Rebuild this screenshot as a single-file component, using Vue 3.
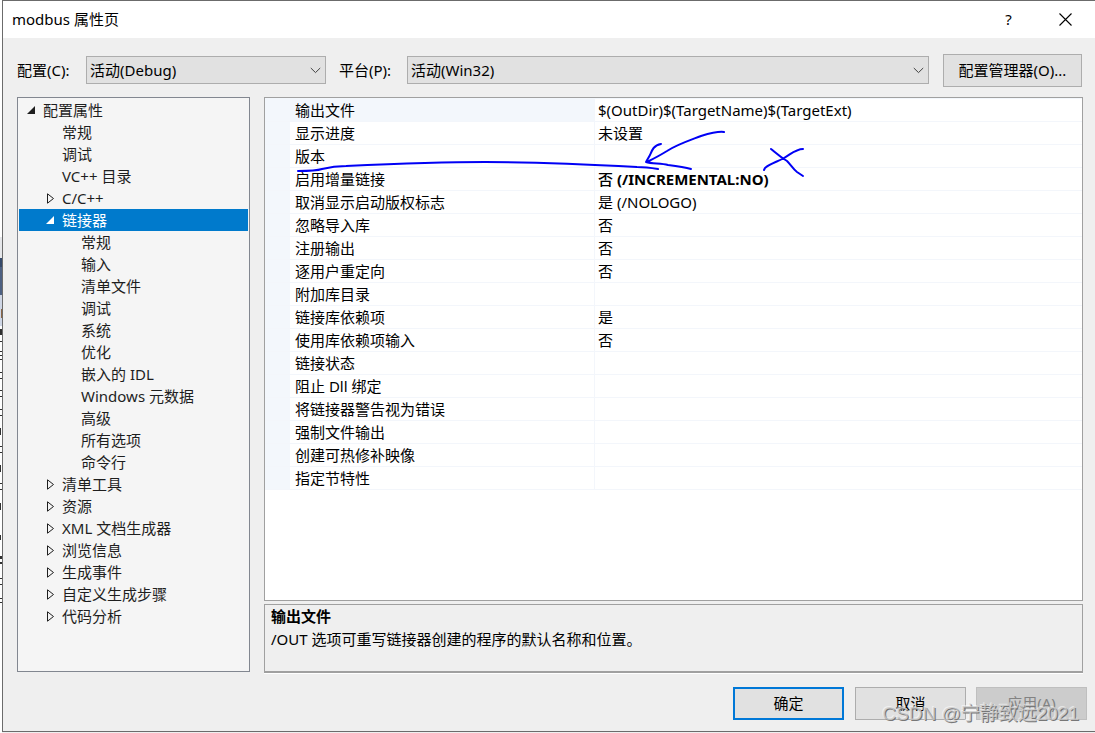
<script setup>
import { ref } from 'vue'

const config = ref('活动(Debug)')
const platform = ref('活动(Win32)')

const tree = [
  { label: '配置属性', level: 1, state: 'open' },
  { label: '常规', level: 2 },
  { label: '调试', level: 2 },
  { label: 'VC++ 目录', level: 2 },
  { label: 'C/C++', level: 2, state: 'closed' },
  { label: '链接器', level: 2, state: 'open', selected: true },
  { label: '常规', level: 3 },
  { label: '输入', level: 3 },
  { label: '清单文件', level: 3 },
  { label: '调试', level: 3 },
  { label: '系统', level: 3 },
  { label: '优化', level: 3 },
  { label: '嵌入的 IDL', level: 3 },
  { label: 'Windows 元数据', level: 3 },
  { label: '高级', level: 3 },
  { label: '所有选项', level: 3 },
  { label: '命令行', level: 3 },
  { label: '清单工具', level: 2, state: 'closed' },
  { label: '资源', level: 2, state: 'closed' },
  { label: 'XML 文档生成器', level: 2, state: 'closed' },
  { label: '浏览信息', level: 2, state: 'closed' },
  { label: '生成事件', level: 2, state: 'closed' },
  { label: '自定义生成步骤', level: 2, state: 'closed' },
  { label: '代码分析', level: 2, state: 'closed' },
]

const properties = [
  { name: '输出文件', value: '$(OutDir)$(TargetName)$(TargetExt)', current: true },
  { name: '显示进度', value: '未设置' },
  { name: '版本', value: '' },
  { name: '启用增量链接', value: '否', flag: '(/INCREMENTAL:NO)', changed: true },
  { name: '取消显示启动版权标志', value: '是 (/NOLOGO)' },
  { name: '忽略导入库', value: '否' },
  { name: '注册输出', value: '否' },
  { name: '逐用户重定向', value: '否' },
  { name: '附加库目录', value: '' },
  { name: '链接库依赖项', value: '是' },
  { name: '使用库依赖项输入', value: '否' },
  { name: '链接状态', value: '' },
  { name: '阻止 Dll 绑定', value: '' },
  { name: '将链接器警告视为错误', value: '' },
  { name: '强制文件输出', value: '' },
  { name: '创建可热修补映像', value: '' },
  { name: '指定节特性', value: '' },
]
</script>

<template>
  <div class="screen">
    <svg class="backdrop" width="2" height="733" viewBox="0 0 2 733" aria-hidden="true">
      <rect width="2" height="733" fill="#ffffff" />
      <rect y="237" width="2" height="22" fill="#e6e7ea" />
      <rect y="258" width="2" height="9" fill="#35496a" />
      <rect y="267" width="2" height="28" fill="#4d6082" />
      <rect y="295" width="2" height="31" fill="#cfd6e5" />
      <rect x="1" y="309" width="1" height="9" fill="#8a6544" />
      <path d="M0 329h2v6H0zM0 341h2v1H0zM0 351h2v1H0zM0 355h2v1H0zM0 359h2v1H0zM0 372h2v1H0zM0 378h2v1H0zM0 390h2v1H0zM0 396h2v1H0zM0 409h2v1H0zM0 415h2v1H0zM0 428h1v7H0zM0 446h2v1H0zM0 452h2v1H0zM0 465h1v7H0zM0 483h2v1H0zM0 489h2v1H0zM0 503h1v7H0zM0 535h1v5H0zM0 556h2v3H0zM0 562h2v2H0zM0 578h2v1H0zM0 584h2v1H0zM0 598h2v1H0zM0 602h2v1H0z" fill="#303030" />
    </svg>

    <main class="dialog">
      <header class="titlebar">
        <h1>modbus 属性页</h1>
        <button class="tool" type="button" aria-label="帮助">?</button>
        <button class="tool" type="button" aria-label="关闭">
          <svg width="13" height="13" viewBox="0 0 13 13"><path d="M.5 .5l12 12M12.500 .5l-12 12" stroke="#000" stroke-width="1.100" /></svg>
        </button>
      </header>

      <section class="toolbar">
        <label for="config">配置(C):</label>
        <div class="combo first">
          <select id="config" v-model="config"><option>活动(Debug)</option></select>
          <svg width="11" height="7" viewBox="0 0 11 7"><path d="M.8 1l4.700 4.600L10.200 1" fill="none" stroke="#404040" /></svg>
        </div>
        <label class="second-label" for="platform">平台(P):</label>
        <div class="combo second">
          <select id="platform" v-model="platform"><option>活动(Win32)</option></select>
          <svg width="11" height="7" viewBox="0 0 11 7"><path d="M.8 1l4.700 4.600L10.200 1" fill="none" stroke="#404040" /></svg>
        </div>
        <button class="push manager" type="button">配置管理器(O)...</button>
      </section>

      <div class="content">
        <ul class="tree" role="tree" aria-label="配置属性">
          <li
            v-for="(item, i) in tree"
            :key="i"
            role="treeitem"
            :aria-level="item.level"
            :aria-selected="!!item.selected"
            :class="['level' + item.level, { selected: item.selected }]"
          >
            <span class="twisty">
              <svg v-if="item.state === 'open'" width="8" height="8" viewBox="0 0 8 8"><path d="M8 0v8H0z" fill="currentColor" /></svg>
              <svg v-else-if="item.state === 'closed'" width="9" height="11" viewBox="0 0 9 11"><path d="M1.500 .8v9.400L7.500 5.500z" fill="none" stroke="currentColor" /></svg>
            </span>
            <span>{{ item.label }}</span>
          </li>
        </ul>

        <div class="right">
          <section class="grid">
            <table>
              <colgroup><col class="gutter-col" /><col class="name-col" /><col /></colgroup>
              <tbody>
                <tr v-for="row in properties" :key="row.name" :class="{ current: row.current, changed: row.changed }">
                  <td class="gutter"></td>
                  <th scope="row">{{ row.name }}</th>
                  <td class="value">{{ row.value }}<strong v-if="row.flag">&nbsp;{{ row.flag }}</strong></td>
                </tr>
              </tbody>
            </table>
            <svg class="ink" width="560" height="90" viewBox="265 98 560 90" aria-hidden="true">
              <path d="M298 171C309 171 316 171 322 169C330 167 335 166 346 166C390 164 440 162 485 162C535 162 600 165 637 167C645 167 652 168 658 169" />
              <path d="M724 132C718 131 711 133 701 136C688 141 676 145 667 151C659 156 653 159 647 162M661 144C654 145 652 150 650 155L646 162C652 164 661 163 668 165C676 166 684 167 691 169" />
              <path d="M771 149C777 154 780 157 787 161C791 165 793 169 797 172L803 176M803 149C796 149 791 154 784 158C777 162 771 163 765 168L764 170" />
            </svg>
          </section>
          <section class="description">
            <h2>输出文件</h2>
            <p>/OUT 选项可重写链接器创建的程序的默认名称和位置。</p>
          </section>
        </div>
      </div>

      <footer>
        <button class="push default" type="button">确定</button>
        <button class="push" type="button">取消</button>
        <button class="push" type="button" disabled>应用(A)</button>
      </footer>
      <span class="watermark">CSDN @宁静致远2021</span>
    </main>
  </div>
</template>

<style>
body {
  background: #efefef;
}
</style>

<style scoped>
* {
  box-sizing: border-box;
}
.screen {
  display: flex;
  min-height: 100vh;
  overflow: hidden;
  font: 15px/22px "Noto Sans", "Noto Sans CJK SC", sans-serif;
  color: #000;
}
button,
select {
  font: inherit;
  color: inherit;
}
.backdrop {
  flex: none;
}
.dialog {
  position: relative;
  flex: 1;
  min-width: 0;
  display: flex;
  flex-direction: column;
  margin-bottom: 1px;
  border: 1px solid #6b6b6b;
  border-right: 0;
  background: #efefef;
}
.titlebar {
  display: flex;
  align-items: center;
  height: 37px;
  padding: 0 1px 1px 9px;
  background: #fff;
}
h1 {
  flex: 1;
  margin: 0;
  font-size: 15px;
  font-weight: 400;
}
.tool {
  display: flex;
  align-items: center;
  justify-content: center;
  width: 57px;
  height: 36px;
  padding: 0;
  border: 0;
  background: none;
}
.toolbar {
  display: flex;
  align-items: center;
  padding: 16px 13px 10px 14px;
}
.toolbar label {
  width: 69px;
  margin-bottom: 2px;
  white-space: nowrap;
}
.toolbar .second-label {
  width: 68px;
  margin-left: 13px;
}
.combo {
  position: relative;
  margin-bottom: 1px;
}
.combo.first {
  width: 240px;
}
.combo.second {
  flex: 1;
}
.combo select {
  display: block;
  appearance: none;
  width: 100%;
  height: 28px;
  padding: 0 20px 0 3px;
  border: 1px solid #adadad;
  border-radius: 0;
  background: #e1e1e1;
}
.combo svg {
  position: absolute;
  right: 5px;
  top: 11px;
  pointer-events: none;
}
.push {
  width: 111px;
  height: 33px;
  padding: 0 0 2px;
  border: 1px solid #adadad;
  background: #e1e1e1;
  white-space: nowrap;
}
.manager {
  width: 139px;
  margin-left: 14px;
}
.content {
  flex: 1;
  display: flex;
  gap: 14px;
  padding: 0 12px 0 14px;
}
.tree {
  flex: none;
  width: 233px;
  margin: 0 0 1px;
  padding: 1px;
  border: 1px solid #828790;
  background: #f5f5f5;
  color: #1e1e1e;
  list-style: none;
}
.tree li {
  display: flex;
  align-items: center;
  height: 22px;
  white-space: nowrap;
}
.level1 {
  padding-left: 8px;
}
.level2 {
  padding-left: 27px;
}
.level3 {
  padding-left: 46px;
}
.twisty {
  display: flex;
  align-items: center;
  width: 16px;
}
.tree .selected {
  background: #007acc;
  color: #fff;
}
.right {
  flex: 1;
  min-width: 0;
  display: flex;
  flex-direction: column;
  gap: 3px;
}
.grid {
  position: relative;
  flex: 1;
  border: 1px solid #a0a0a0;
  background: #fff;
}
table {
  width: 100%;
  table-layout: fixed;
  border-collapse: separate;
  border-spacing: 0;
  border-top: 1px solid #f3f7fc;
}
.gutter-col {
  width: 25px;
}
.name-col {
  width: 304px;
}
th,
td {
  height: 23px;
  padding: 0 0 0 5px;
  border-bottom: 1px solid #f3f6fb;
  text-align: left;
  font-weight: 400;
  white-space: nowrap;
}
.value {
  border-left: 1px solid #f3f6fb;
  padding-left: 3px;
}
.gutter,
.current th {
  background: #f3f7fc;
}
.changed .value {
  font-weight: 500;
}
.ink {
  position: absolute;
  left: 0;
  top: 0;
  fill: none;
  stroke: #0000f5;
  stroke-width: 2;
  stroke-linecap: round;
  stroke-linejoin: round;
  pointer-events: none;
}
.description {
  height: 69px;
  padding: 0 6px;
  border: 1px solid #a0a0a0;
  border-bottom-width: 2px;
  box-shadow: 0 1px #fff;
}
h2,
p {
  margin: 0;
  font-size: 15px;
  line-height: 23px;
}
footer {
  display: flex;
  justify-content: flex-end;
  gap: 11px;
  padding: 14px 8px 11px;
}
footer .push:last-child {
  margin-left: -1px;
}
.default {
  border: 2px solid #0078d7;
}
.push:disabled {
  border-color: #bfbfbf;
  background: #cccccc;
  color: #838383;
}
.watermark {
  position: absolute;
  right: 16px;
  bottom: 5px;
  font: 19px/24px "Liberation Sans", "Noto Sans CJK SC", sans-serif;
  color: rgba(205, 205, 205, 0.8);
  text-shadow: 1px 1px #777, -1px -1px rgba(255, 255, 255, 0.5);
  white-space: nowrap;
  pointer-events: none;
}
</style>
